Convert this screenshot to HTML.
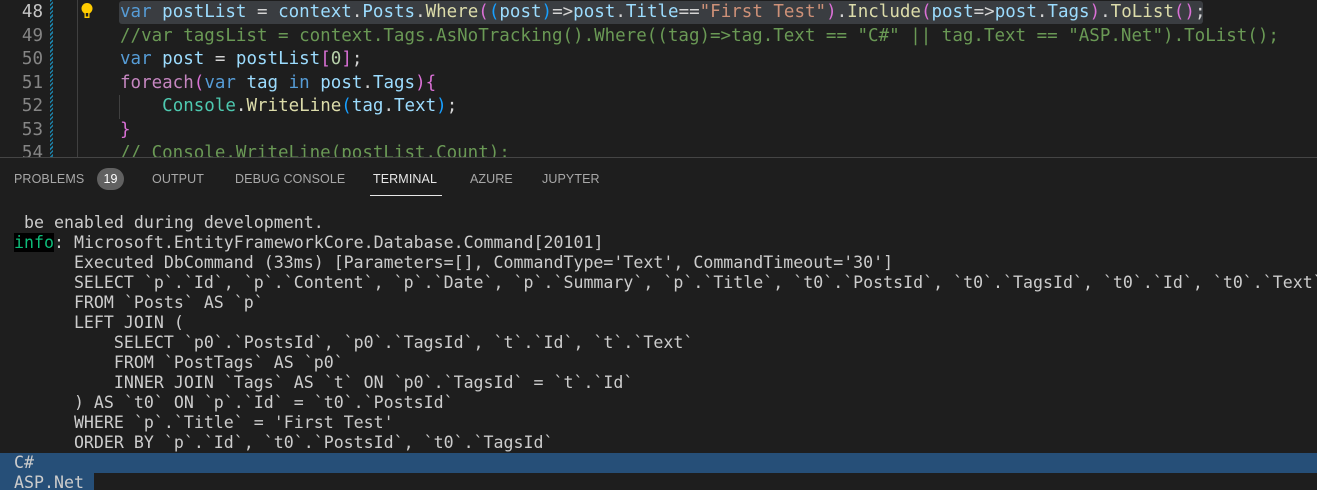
<!DOCTYPE html>
<html><head><meta charset="utf-8"><style>
html,body{margin:0;padding:0;background:#1e1e1e;width:1317px;height:490px;overflow:hidden;position:relative}
.ed{position:absolute;left:0;top:0;width:1317px;height:157px;overflow:hidden;font-family:"DejaVu Sans Mono","Liberation Mono",monospace;font-size:17.5px}
.ln{position:absolute;left:0;width:43px;text-align:right;color:#858585;height:23.5px;line-height:23.5px}
.cl{position:absolute;left:120px;height:23.5px;line-height:23.5px;white-space:pre;color:#d4d4d4}
.k{color:#569cd6}.v{color:#9cdcfe}.m{color:#dcdcaa}.s{color:#ce9178}.c{color:#6a9955}.p{color:#da70d6}.b{color:#179fff}.f{color:#c586c0}.n{color:#b5cea8}.t{color:#4ec9b0}
.tabs{position:absolute;top:172px;font-family:"Liberation Sans",sans-serif;font-size:12.5px;color:#a8a8a8;letter-spacing:0.1px}
.term{position:absolute;left:0;top:213px;width:1317px;font-family:"DejaVu Sans Mono","Liberation Mono",monospace;font-size:16.6px;color:#cccccc}
.tl{height:20px;line-height:20px;white-space:pre;padding-left:14px}
</style></head><body>
<div class="ed">
<div style="position:absolute;left:119px;top:1px;width:1084px;height:23px;background:#3a3d41;border-radius:3px"></div>
<div style="position:absolute;left:50px;top:0;width:3px;height:157px;background:repeating-linear-gradient(135deg,#1b81a8 0 1.5px,transparent 1.5px 3px)"></div>
<div style="position:absolute;left:77px;top:0;width:1px;height:157px;background:#404040"></div>
<div style="position:absolute;left:119px;top:95px;width:1px;height:23.5px;background:#404040"></div>
<svg style="position:absolute;left:80px;top:2px" width="14" height="18" viewBox="0 0 14 18"><circle cx="7" cy="6.5" r="5.5" fill="#ffcc00"/><rect x="4.5" y="10" width="5" height="6" fill="#ffcc00"/><rect x="5.8" y="11" width="2.4" height="3.5" fill="#1e1e1e"/></svg>
<div class="ln" style="top:1px;color:#c6c6c6">48</div>
<div class="ln" style="top:24.5px">49</div>
<div class="ln" style="top:48px">50</div>
<div class="ln" style="top:71.5px">51</div>
<div class="ln" style="top:95px">52</div>
<div class="ln" style="top:118.5px">53</div>
<div class="ln" style="top:142px">54</div>
<div class="cl" style="top:1px"><span class="k">var</span> <span class="v">postList</span> = <span class="v">context</span>.<span class="v">Posts</span>.<span class="m">Where</span><span class="p">(</span><span class="b">(</span><span class="v">post</span><span class="b">)</span>=&gt;<span class="v">post</span>.<span class="v">Title</span>==<span class="s">"First Test"</span><span class="p">)</span>.<span class="m">Include</span><span class="p">(</span><span class="v">post</span>=&gt;<span class="v">post</span>.<span class="v">Tags</span><span class="p">)</span>.<span class="m">ToList</span><span class="p">()</span>;</div>
<div class="cl c" style="top:24.5px">//var tagsList = context.Tags.AsNoTracking().Where((tag)=&gt;tag.Text == "C#" || tag.Text == "ASP.Net").ToList();</div>
<div class="cl" style="top:48px"><span class="k">var</span> <span class="v">post</span> = <span class="v">postList</span><span class="p">[</span><span class="n">0</span><span class="p">]</span>;</div>
<div class="cl" style="top:71.5px"><span class="f">foreach</span><span class="p">(</span><span class="k">var</span> <span class="v">tag</span> <span class="k">in</span> <span class="v">post</span>.<span class="v">Tags</span><span class="p">){</span></div>
<div class="cl" style="top:95px">    <span class="t">Console</span>.<span class="m">WriteLine</span><span class="b">(</span><span class="v">tag</span>.<span class="v">Text</span><span class="b">)</span>;</div>
<div class="cl" style="top:118.5px"><span class="p">}</span></div>
<div class="cl c" style="top:142px">// Console.WriteLine(postList.Count);</div>
</div>
<div style="position:absolute;left:0;top:157px;width:1317px;height:1px;background:#454545"></div>
<div class="tabs" style="left:14px">PROBLEMS</div>
<div style="position:absolute;left:97px;top:168px;width:27px;height:22px;border-radius:11px;background:#616161;color:#fff;font-family:'Liberation Sans',sans-serif;font-size:12.5px;text-align:center;line-height:22px">19</div>
<div class="tabs" style="left:152px">OUTPUT</div>
<div class="tabs" style="left:235px">DEBUG CONSOLE</div>
<div class="tabs" style="left:373px;color:#e7e7e7">TERMINAL</div>
<div style="position:absolute;left:370px;top:195px;width:72px;height:1px;background:#e7e7e7"></div>
<div class="tabs" style="left:470px">AZURE</div>
<div class="tabs" style="left:542px">JUPYTER</div>
<div class="term">
<div class="tl"> be enabled during development.</div>
<div class="tl"><span style="background:#000;color:#0dbc79">info</span>: Microsoft.EntityFrameworkCore.Database.Command[20101]</div>
<div class="tl">      Executed DbCommand (33ms) [Parameters=[], CommandType='Text', CommandTimeout='30']</div>
<div class="tl">      SELECT `p`.`Id`, `p`.`Content`, `p`.`Date`, `p`.`Summary`, `p`.`Title`, `t0`.`PostsId`, `t0`.`TagsId`, `t0`.`Id`, `t0`.`Text`</div>
<div class="tl">      FROM `Posts` AS `p`</div>
<div class="tl">      LEFT JOIN (</div>
<div class="tl">          SELECT `p0`.`PostsId`, `p0`.`TagsId`, `t`.`Id`, `t`.`Text`</div>
<div class="tl">          FROM `PostTags` AS `p0`</div>
<div class="tl">          INNER JOIN `Tags` AS `t` ON `p0`.`TagsId` = `t`.`Id`</div>
<div class="tl">      ) AS `t0` ON `p`.`Id` = `t0`.`PostsId`</div>
<div class="tl">      WHERE `p`.`Title` = 'First Test'</div>
<div class="tl">      ORDER BY `p`.`Id`, `t0`.`PostsId`, `t0`.`TagsId`</div>
<div class="tl" style="background:#264f78">C#</div>
<div class="tl"><span style="background:#264f78;margin-left:-14px;padding-left:14px">ASP.Net </span></div>
</div>
</body></html>
